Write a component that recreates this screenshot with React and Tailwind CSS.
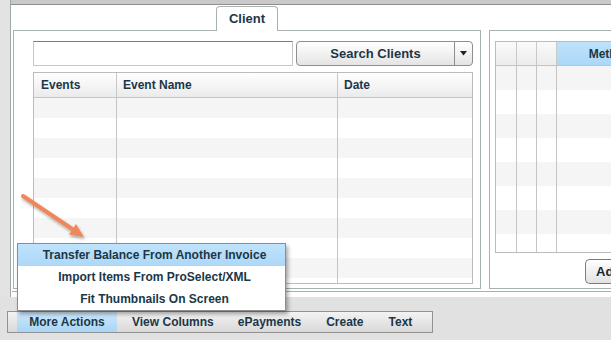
import React from "react";

const leftRows = Array.from({ length: 10 }, (_, i) => i);
const rightRows = Array.from({ length: 8 }, (_, i) => i);

function LeftTable() {
  return (
    <div className="mt-[6px] h-[212px] border border-[#bcbcbc] overflow-hidden bg-white">
      <div className="flex h-[25px] border-b border-[#c4c4c4] bg-gradient-to-b from-[#ffffff] to-[#ebebeb]">
        <div className="w-[83px] border-r border-[#c8c8c8] pl-[7px] flex items-center">Events</div>
        <div className="w-[221px] border-r border-[#c8c8c8] pl-[6px] flex items-center">Event Name</div>
        <div className="flex-1 pl-[6px] flex items-center">Date</div>
      </div>
      {leftRows.map((i) => (
        <div key={i} className={i % 2 === 0 ? "flex h-[20px] bg-[#f5f5f5]" : "flex h-[20px] bg-white"}>
          <div className="w-[83px] border-r border-[#c4c4c4]" />
          <div className="w-[221px] border-r border-[#c4c4c4]" />
          <div className="flex-1" />
        </div>
      ))}
    </div>
  );
}

function RightTable() {
  return (
    <div className="h-[212px] border border-r-0 border-[#bcbcbc] overflow-hidden bg-white">
      <div className="flex h-[24px] border-b border-[#c4c4c4]">
        <div className="w-[21px] border-r border-[#c8c8c8] bg-gradient-to-b from-[#fafafa] to-[#ececec]" />
        <div className="w-[20px] border-r border-[#c8c8c8] bg-gradient-to-b from-[#fafafa] to-[#ececec]" />
        <div className="w-[20px] border-r border-[#c8c8c8] bg-gradient-to-b from-[#fafafa] to-[#ececec]" />
        <div className="w-[106px] shrink-0 flex items-center justify-center bg-gradient-to-b from-[#bde2fb] to-[#acd8f7]">Method</div>
      </div>
      {rightRows.map((i) => (
        <div key={i} className={i % 2 === 0 ? "flex h-[24px] bg-[#f5f5f5]" : "flex h-[24px] bg-white"}>
          <div className="w-[21px] border-r border-[#c4c4c4]" />
          <div className="w-[20px] border-r border-[#c4c4c4]" />
          <div className="w-[20px] border-r border-[#c4c4c4]" />
          <div className="flex-1" />
        </div>
      ))}
    </div>
  );
}

export default function App() {
  return (
    <div
      className="relative w-[611px] h-[340px] overflow-hidden bg-[#e1e1e1] text-[12px] font-bold text-[#1b3747]"
      style={{ fontFamily: '"Liberation Sans", Arial, sans-serif' }}
    >
      <div className="flex h-[297px]">
        <div className="w-[10px] shrink-0 bg-[#e3e3e3]" />
        <div className="flex-1 flex flex-col bg-white border-l border-[#9eaaa8]">
          <div className="h-[5px] bg-[#c9c9c9] border-b border-[#8e8e8e]" />
          <div className="h-[25px] flex">
            <div className="relative z-10 ml-[205px] mt-[1px] w-[62px] h-[25px] rounded-t-[4px] border border-b-0 border-[#a7b1af] bg-white flex items-center justify-center text-[13px]">
              Client
            </div>
          </div>
          <div className="flex ml-[2px]">
            <div className="w-[468px] h-[259px] shrink-0 border border-[#a7b1af] pt-[10px] pl-[19px] pr-[7px]">
              <div className="flex h-[25px] gap-[3px]">
                <div className="w-[260px] h-[25px] border border-[#c6c6c6] border-t-[#7c7c7c] bg-white" />
                <div className="flex-1 flex h-[25px] rounded-[4px] border border-[#8e8e8e] bg-gradient-to-b from-[#ffffff] to-[#e4e4e4]">
                  <div className="flex-1 flex items-center justify-center text-[13px]">Search Clients</div>
                  <div className="w-[18px] border-l border-[#8e8e8e] flex items-center justify-center">
                    <svg width="7" height="5" viewBox="0 0 7 5">
                      <polygon points="0,0 7,0 3.5,4.5" fill="#222" />
                    </svg>
                  </div>
                </div>
              </div>
              <LeftTable />
            </div>
            <div className="ml-[8px] flex-1 h-[259px] border border-r-0 border-[#a7b1af] pt-[10px] pl-[5px]">
              <RightTable />
              <div className="mt-[6px] ml-[90px] h-[25px] rounded-l-[5px] border border-r-0 border-[#7c7c7c] bg-gradient-to-b from-[#ffffff] to-[#e2e2e2] flex items-center pl-[10px] text-[13px] text-[#13293a]">
                Add
              </div>
            </div>
          </div>
          <div className="h-[3px] border-b border-[#a7b1af] ml-[1px]" />
        </div>
      </div>

      <div className="mt-[14px] ml-[7px] flex">
        <div className="flex h-[22px] border border-[#929292] bg-gradient-to-b from-[#f3f3f3] to-[#d9d9d9] pl-[9px] pr-[8px]">
          <div className="w-[100px] flex items-center justify-center bg-gradient-to-b from-[#cde8fc] to-[#a9d5f6]">More Actions</div>
          <div className="pl-[15px] pr-[12px] flex items-center">View Columns</div>
          <div className="px-[12px] flex items-center">ePayments</div>
          <div className="px-[13px] flex items-center">Create</div>
          <div className="px-[12px] flex items-center">Text</div>
        </div>
      </div>

      <div className="absolute left-[17px] top-[243px] w-[269px] border border-[#8d8d8d] bg-white shadow-[2px_3px_4px_rgba(0,0,0,0.35)]">
        <div className="h-[22px] flex items-center justify-center pl-[6px] bg-gradient-to-b from-[#bfe3fc] to-[#acd8f7]">
          Transfer Balance From Another Invoice
        </div>
        <div className="h-[22px] flex items-center justify-center pl-[6px]">Import Items From ProSelect/XML</div>
        <div className="h-[22px] flex items-center justify-center pl-[6px]">Fit Thumbnails On Screen</div>
      </div>

      <svg className="absolute left-0 top-[180px]" width="100" height="70" viewBox="0 0 100 70">
        <defs>
          <filter id="sh" x="-20%" y="-20%" width="150%" height="150%">
            <feDropShadow dx="1" dy="2" stdDeviation="1.5" floodColor="#000" floodOpacity="0.35" />
          </filter>
        </defs>
        <g filter="url(#sh)">
          <line x1="23" y1="16" x2="73" y2="49.5" stroke="#f0875a" strokeWidth="4" strokeLinecap="round" />
          <polygon points="69,54.5 76,44 84,57" fill="#f0875a" />
        </g>
      </svg>
    </div>
  );
}
